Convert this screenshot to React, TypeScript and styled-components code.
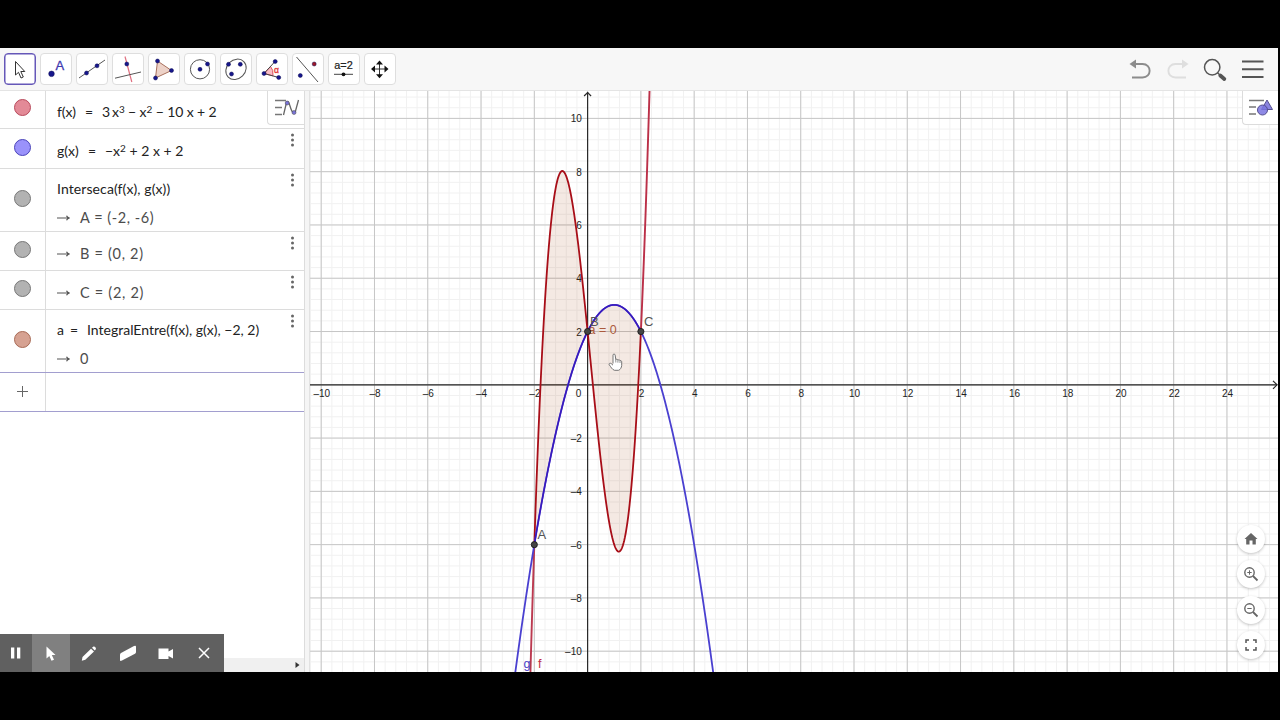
import React from "react";
import styled, { createGlobalStyle } from "styled-components";

const GlobalStyle = createGlobalStyle`
  * { box-sizing: border-box; }
  html, body { margin: 0; padding: 0; background: #000; overflow: hidden; }
`;

const Screen = styled.div`
  width: 1280px;
  height: 720px;
  padding: 48px 2px 48px 0;
  background: #000;
  font-family: "Liberation Sans", Arial, sans-serif;
`;
const Window = styled.div`
  height: 624px;
  display: flex;
  flex-direction: column;
  background: #fff;
  position: relative;
  overflow: hidden;
`;
const Toolbar = styled.div`
  height: 43px;
  flex: none;
  display: flex;
  align-items: center;
  justify-content: space-between;
  padding: 0 12px 0 4px;
  background: #f7f7f7;
  border-bottom: 1px solid #e4e4e4;
`;
const Tools = styled.div`
  display: flex;
  gap: 4px;
`;
const Tool = styled.div<{ $active?: boolean }>`
  width: 32px;
  height: 32px;
  border-radius: 4px;
  background: #fff;
  border: 1px solid ${(p) => (p.$active ? "#6557b8" : "#dedede")};
  box-shadow: ${(p) => (p.$active ? "inset 0 0 0 0.5px #6557b8" : "none")};
  display: flex;
  align-items: center;
  justify-content: center;
  svg { flex: none; display: block; }
`;
const Actions = styled.div`
  display: flex;
  align-items: center;
  svg { display: block; }
`;
const Body = styled.div`
  flex: 1;
  display: flex;
  min-height: 0;
`;
const Algebra = styled.div`
  width: 305px;
  flex: none;
  display: flex;
  flex-direction: column;
  border-right: 1px solid #dcdcdc;
  position: relative;
`;
const Splitter = styled.div`
  width: 5px;
  flex: none;
  background: #f5f5f5;
  border-right: 1px solid #e2e2e2;
`;
const Row = styled.div<{ $h: number; $input?: boolean }>`
  height: ${(p) => p.$h}px;
  flex: none;
  display: flex;
  border-bottom: ${(p) => (p.$input ? "1.5px solid #a29ecf" : "1px solid #dcdcdc")};
`;
const Marble = styled.div<{ $raise?: number }>`
  width: 46px;
  flex: none;
  border-right: 1px solid #dcdcdc;
  display: flex;
  align-items: center;
  justify-content: center;
  padding-bottom: ${(p) => p.$raise ?? 3}px;
`;
const Dot = styled.span<{ $fill: string; $line: string }>`
  width: 17px;
  height: 17px;
  border-radius: 50%;
  background: ${(p) => p.$fill};
  border: 1px solid ${(p) => p.$line};
`;
const Lines = styled.div`
  flex: 1;
  display: flex;
  flex-direction: column;
  padding-left: 11px;
`;
const Formula = styled.div<{ $top: number; $ls?: number }>`
  margin-top: ${(p) => p.$top}px;
  height: 20px;
  line-height: 20px;
  font-family: Lato, sans-serif;
  font-size: 14px;
  letter-spacing: ${(p) => p.$ls ?? 0}px;
  color: #222;
  white-space: pre;
  display: flex;
`;
const Output = styled(Formula)`
  font-size: 14.5px;
  letter-spacing: ${(p) => p.$ls ?? 0.7}px;
  color: #4c4c4c;
`;
const Arrow = styled.span`
  width: 23px;
  display: flex;
  align-items: center;
`;
const Sup = styled.sup`
  font-size: 10px;
  line-height: 10px;
  margin-top: 2px;
`;
const Tok = styled.span<{ $w: number }>`
  width: ${(p) => p.$w}px;
  flex: none;
`;
const More = styled.div`
  width: 24px;
  padding-top: 4px;
  display: flex;
  justify-content: center;
  align-items: flex-start;
`;
const StyleTab = styled.div<{ $w: number; $h: number }>`
  position: absolute;
  top: 0;
  right: 0;
  width: ${(p) => p.$w}px;
  height: ${(p) => p.$h}px;
  background: #fff;
  border-left: 1px solid #dcdcdc;
  border-bottom: 1px solid #dcdcdc;
  border-bottom-left-radius: 4px;
  svg { display: block; }
`;
const Plus = styled.span`
  width: 11px;
  height: 11px;
  background: linear-gradient(#666, #666) center / 11px 1px no-repeat,
    linear-gradient(#666, #666) center / 1px 11px no-repeat;
`;
const HScroll = styled.div`
  margin-top: auto;
  height: 14px;
  background: #f0f0f0;
  display: flex;
  justify-content: flex-end;
  align-items: center;
  padding-right: 4px;
`;
const Graph = styled.div`
  flex: 1;
  position: relative;
  overflow: hidden;
  > svg { display: block; }
`;
const Zooms = styled.div`
  position: absolute;
  right: 13px;
  bottom: 13px;
  display: flex;
  flex-direction: column;
  gap: 7.3px;
`;
const Round = styled.div`
  width: 28px;
  height: 28px;
  border-radius: 50%;
  background: #fff;
  box-shadow: 0 1px 3px rgba(0, 0, 0, 0.24);
  display: flex;
  align-items: center;
  justify-content: center;
`;
const Recorder = styled.div`
  position: absolute;
  left: 0;
  bottom: 0;
  width: 224px;
  height: 38px;
  background: #606060;
  display: flex;
`;
const RecButton = styled.div<{ $w: number; $on?: boolean }>`
  width: ${(p) => p.$w}px;
  background: ${(p) => (p.$on ? "#808080" : "transparent")};
  display: flex;
  align-items: center;
  justify-content: center;
`;

const navy = "#16168c";
const P = ({ x, y, c = navy }: { x: number; y: number; c?: string }) => (
  <circle cx={x} cy={y} r={2} fill={c} stroke="#0a0a50" strokeWidth={0.5} />
);
const Ico = ({ children, s = 32 }: { children: React.ReactNode; s?: number }) => (
  <svg width={s} height={s} viewBox={`0 0 ${s} ${s}`} fill="none">{children}</svg>
);

/* ---- graph geometry ---- */
const W = 968, H = 581, U = 26.64, OX = 277.6, OY = 293.8;
const px = (x: number) => OX + x * U;
const py = (y: number) => OY - y * U;
const f = (x: number) => 3 * x ** 3 - x ** 2 - 10 * x + 2;
const g = (x: number) => -(x ** 2) + 2 * x + 2;
const trace = (fn: (x: number) => number, a: number, b: number) => {
  const n = 160;
  return Array.from({ length: n + 1 }, (_, i) => {
    const x = a + ((b - a) * i) / n;
    return `${px(x).toFixed(2)},${py(fn(x)).toFixed(2)}`;
  });
};
const line = (pts: string[]) => "M" + pts.join("L");
const area = line([...trace(f, -2, 2), ...trace(g, -2, 2).reverse()]) + "Z";
const range = (a: number, b: number) => Array.from({ length: b - a + 1 }, (_, i) => a + i);
const num = (n: number) => (n < 0 ? "–" + -n : String(n));

const Plot = () => (
  <svg width={W} height={H} viewBox={`0 0 ${W} ${H}`} fill="none" fontFamily='"Liberation Sans", Arial, sans-serif'>
    {range(-26, 65).map((i) => (
      <line key={"a" + i} x1={px(i * 0.4)} x2={px(i * 0.4)} y1={0} y2={H} stroke="#f1f1f1" />
    ))}
    {range(-27, 28).map((i) => (
      <line key={"b" + i} y1={py(i * 0.4)} y2={py(i * 0.4)} x1={0} x2={W} stroke="#f1f1f1" />
    ))}
    {range(-5, 12).map((i) => (
      <line key={"c" + i} x1={px(i * 2)} x2={px(i * 2)} y1={0} y2={H} stroke="#c6c6c6" />
    ))}
    {range(-5, 5).map((i) => (
      <line key={"d" + i} y1={py(i * 2)} y2={py(i * 2)} x1={0} x2={W} stroke="#c6c6c6" />
    ))}
    <path d={`M0 ${OY}H${W - 1}M${OX} 1V${H}`} stroke="#2a2a2a" strokeWidth={1.2} />
    <path d={`M${W - 5} ${OY - 4}L${W - 1} ${OY}L${W - 5} ${OY + 4}M${OX - 3.5} 5L${OX} 1.5L${OX + 3.5} 5`} stroke="#2a2a2a" strokeWidth={1.2} />
    <g fontSize={10} fill="#222">
      {range(-5, 12).map((i) =>
        i === 0 ? (
          <text key={i} x={268.5} y={306} textAnchor="middle">0</text>
        ) : (
          <text key={i} x={px(i * 2) + (i < 0 ? 0.6 : 0.6)} y={306} textAnchor="middle">{num(i * 2)}</text>
        )
      )}
      {range(-5, 5).filter((i) => i !== 0).map((i) => (
        <text key={i} x={271.8} y={py(i * 2) + 4} textAnchor="end">{num(i * 2)}</text>
      ))}
    </g>
    <path d={area} fill="#993300" fillOpacity={0.11} />
    <path d={line(trace(f, -2.4, -2))} stroke="#bb3a50" strokeWidth={1.9} />
    <path d={line(trace(f, 2, 2.45))} stroke="#bb3048" strokeWidth={1.9} />
    <path d={line(trace(f, -2, 2))} stroke="#a80e18" strokeWidth={1.8} />
    <path d={line(trace(g, -3, 5))} stroke="#4a40d0" strokeWidth={1.8} />
    <path d={line(trace(g, -2, 2))} stroke="#3818bc" strokeWidth={1.5} />
    <g fontSize={13}>
      <text x={227.5} y={447.5} fill="#555">A</text>
      <text x={280} y={234.5} fill="#555">B</text>
      <text x={334} y={234.5} fill="#555">C</text>
      <text x={278.5} y={243} fontSize={12.5} fill="#ab5a3c">a = 0</text>
      <text x={213.500} y={577} fontSize={12.5} fill="#4a40c8">g</text>
      <text x={228} y={577} fontSize={12.5} fill="#c02a44">f</text>
    </g>
    {[[-2, -6], [0, 2], [2, 2]].map(([x, y]) => (
      <circle key={x} cx={px(x)} cy={py(y)} r={3.1} fill="#444" stroke="#111" strokeWidth={0.8} />
    ))}
    <path
      transform="translate(298,262)"
      d="M5 10.5V2.2C5 .6 7 .6 7.200 2.200L7.800 6.800C8.500 5.800 9.600 6.100 9.900 7.200C10.700 6.400 11.800 6.800 12 7.700C13 7.200 13.700 8 13.700 9V12.500C13.500 14.500 12.500 16.600 10.500 17.300H6.500C4 16.500 3 14 1.200 11.700C.6 10.400 2.300 9.700 3.300 10.700L5 12.200"
      fill="#fff" stroke="#666" strokeWidth={0.9} strokeLinejoin="round"
    />
    <path transform="translate(298,262)" d="M7.800 6.800V9.500M9.900 7.200V9.700M12 7.700V10" stroke="#777" strokeWidth={0.8} />
  </svg>
);

const Kebab = () => (
  <More>
    <svg width="5" height="14" viewBox="0 0 5 14" fill="#666">
      <circle cx="2.500" cy="2" r="1.500" /><circle cx="2.500" cy="7" r="1.500" /><circle cx="2.500" cy="12" r="1.500" />
    </svg>
  </More>
);
const To = () => (
  <Arrow>
    <svg width="14" height="8" viewBox="0 0 14 8" fill="none" stroke="#555" strokeWidth="1.200">
      <path d="M0 4H12M9.500 1.800C10 3 11 3.700 12.600 4C11 4.300 10 5 9.500 6.200" />
    </svg>
  </Arrow>
);

export default function App() {
  return (
    <Screen>
      <GlobalStyle />
      <Window>
        <Toolbar>
          <Tools>
            <Tool $active>
              <Ico>
                <path d="M11.500 8.500V22L14.500 19.300L17 25L19.300 24L16.800 18.500H20.800Z" fill="#fff" stroke="#333" strokeWidth="1" />
              </Ico>
            </Tool>
            <Tool>
              <Ico>
                <circle cx="11.500" cy="20.800" r="2.800" fill={navy} stroke="#0a0a50" strokeWidth="0.500" />
                <text x="15.500" y="16.500" fontSize="13" fill="#4038b0" stroke="#4038b0" strokeWidth="0.300" fontFamily='"Liberation Sans", sans-serif'>A</text>
              </Ico>
            </Tool>
            <Tool>
              <Ico><path d="M3 25L29 7" stroke="#555" /><P x={10.500} y={20} /><P x={21} y={12.800} /></Ico>
            </Tool>
            <Tool>
              <Ico><path d="M13 3.500L19.800 29" stroke="#e07080" strokeWidth="1.200" /><path d="M3 25.200L29 19" stroke="#555" /><P x={14.800} y={11} /></Ico>
            </Tool>
            <Tool>
              <Ico><path d="M9.500 8L23.500 17.500L7.500 25Z" fill="#edd2c8" stroke="#a8705c" /><P x={9.500} y={8} /><P x={23.500} y={17.500} /><P x={7.500} y={25} /></Ico>
            </Tool>
            <Tool>
              <Ico><circle cx="16" cy="16.300" r="9.600" stroke="#555" /><P x={16} y={16.300} /><P x={23.500} y={11} /></Ico>
            </Tool>
            <Tool>
              <Ico><ellipse cx="16" cy="16.300" rx="11" ry="9.300" transform="rotate(-45 16 16.300)" stroke="#555" /><P x={8.500} y={11.300} /><P x={20.300} y={11.300} /><P x={11.500} y={21} /></Ico>
            </Tool>
            <Tool>
              <Ico>
                <path d="M8 20.500L14.500 13.500Q17.500 16.500 17 22.800Z" fill="#f8bcc4" stroke="#dd5566" />
                <path d="M19.200 8.300L8 20.500L22.700 24.500" stroke="#444" />
                <P x={19.200} y={8.500} /><P x={8} y={20.500} /><P x={22.700} y={24.500} />
                <text x="18" y="19.500" fontSize="8.500" fill="#d33" stroke="#d33" strokeWidth="0.300" fontFamily='"Liberation Sans", sans-serif'>α</text>
              </Ico>
            </Tool>
            <Tool>
              <Ico><path d="M4.500 4L26 29" stroke="#555" /><P x={22.200} y={11} c="#a01828" /><P x={8.300} y={22.500} /></Ico>
            </Tool>
            <Tool>
              <Ico>
                <text x="6.300" y="15.500" fontSize="10" textLength="18.500" lengthAdjust="spacingAndGlyphs" fill="#222" stroke="#222" strokeWidth="0.200" fontFamily='"Liberation Sans", sans-serif'>a=2</text>
                <path d="M6 21.300H25" stroke="#444" /><circle cx="15.500" cy="21.300" r="1.900" fill="#111" />
              </Ico>
            </Tool>
            <Tool>
              <Ico>
                <path d="M9 16H23M15.500 10V23" stroke="#333" />
                <path d="M15.500 7.500L19 11.500H12ZM15.500 25.300L19 21.300H12ZM7 16L11 12.500V19.500ZM24.500 16L20.500 12.500V19.500Z" fill="#111" />
              </Ico>
            </Tool>
          </Tools>
          <Actions>
            <svg width="146" height="32" viewBox="0 0 146 32" fill="none">
              <path d="M14 11H22.500C32 11 32 24.500 22.500 24.500H12" stroke="#8c8c8c" strokeWidth="1.900" />
              <path d="M9.500 11L16 6.500V15.500Z" fill="#8c8c8c" />
              <path d="M64 11H55.500C46 11 46 24.500 55.500 24.500H66" stroke="#dedede" strokeWidth="1.900" />
              <path d="M68.500 11L62 6.500V15.500Z" fill="#dedede" />
              <circle cx="92.200" cy="14.300" r="7.700" stroke="#555" strokeWidth="1.500" />
              <path d="M97.500 19.800L100.500 22.500" stroke="#555" strokeWidth="1.400" />
              <path d="M100.300 22.500L104.300 26" stroke="#555" strokeWidth="3.800" strokeLinecap="round" />
              <path d="M122 8.500H143.500M122 16.300H143.500M122 24H143.500" stroke="#555" strokeWidth="2" />
            </svg>
          </Actions>
        </Toolbar>
        <Body>
          <Algebra>
            <Row $h={38}>
              <Marble $raise={4}><Dot $fill="#e38a97" $line="#b84a5c" /></Marble>
              <Lines>
                <Formula $top={11} $ls={-0.1}>
                  <Tok $w={28}>f(x)</Tok><Tok $w={17}>=</Tok><Tok $w={10}>3</Tok><span>x</span><Sup>3</Sup>
                  <span> − x</span><Sup>2</Sup><span> − 10 x + 2</span>
                </Formula>
              </Lines>
            </Row>
            <Row $h={40}>
              <Marble $raise={2}><Dot $fill="#9a92fb" $line="#4a44b8" /></Marble>
              <Lines>
                <Formula $top={12}>
                  <Tok $w={31}>g(x)</Tok><Tok $w={17}>=</Tok><span>−x</span><Sup>2</Sup><span> + 2 x + 2</span>
                </Formula>
              </Lines>
              <Kebab />
            </Row>
            <Row $h={63}>
              <Marble><Dot $fill="#b2b2b2" $line="#777" /></Marble>
              <Lines>
                <Formula $top={10} $ls={0.1}>Interseca(f(x), g(x))</Formula>
                <Output $top={9} $ls={0.55}><To />A = (-2, -6)</Output>
              </Lines>
              <Kebab />
            </Row>
            <Row $h={39}>
              <Marble><Dot $fill="#b2b2b2" $line="#777" /></Marble>
              <Lines><Output $top={12}><To />B = (0, 2)</Output></Lines>
              <Kebab />
            </Row>
            <Row $h={39}>
              <Marble><Dot $fill="#b2b2b2" $line="#777" /></Marble>
              <Lines><Output $top={12}><To />C = (2, 2)</Output></Lines>
              <Kebab />
            </Row>
            <Row $h={63} $input>
              <Marble><Dot $fill="#d6a292" $line="#a86a55" /></Marble>
              <Lines>
                <Formula $top={10}><Tok $w={13}>a</Tok><Tok $w={17}>=</Tok>IntegralEntre(f(x), g(x), −2, 2)</Formula>
                <Output $top={9}><To />0</Output>
              </Lines>
              <Kebab />
            </Row>
            <Row $h={39} $input>
              <Marble $raise={1}><Plus /></Marble>
            </Row>
            <HScroll>
              <svg width="5" height="8" viewBox="0 0 5 8"><path d="M0.500 1L4.500 4L0.500 7Z" fill="#333" /></svg>
            </HScroll>
            <StyleTab $w={37} $h={34}>
              <svg width="36" height="33" viewBox="0 0 36 33" fill="none">
                <path d="M7 9.500H18M7 16.500H14M7 23.500H14" stroke="#777" strokeWidth="1.500" />
                <path d="M15.500 24L18.500 11.500C20 9.500 21 11.500 22 15C24.500 23.500 26.500 23 27.500 20L30.500 9" stroke="#666" strokeWidth="1.300" />
                <circle cx="19.200" cy="12" r="2" fill="#7a74d8" stroke="#444" strokeWidth=".5" />
                <circle cx="26" cy="21.500" r="2" fill="#7a74d8" stroke="#444" strokeWidth=".5" />
              </svg>
            </StyleTab>
          </Algebra>
          <Splitter />
          <Graph>
            <Plot />
            <StyleTab $w={36} $h={34}>
              <svg width="35" height="33" viewBox="0 0 35 33" fill="none">
                <path d="M6 9.500H21M6 16H13M6 23H13" stroke="#777" strokeWidth="1.500" />
                <path d="M24 9L29.500 18.500H18.500Z" fill="#8a84e0" stroke="#55508f" strokeWidth="1" />
                <circle cx="19.500" cy="19" r="5" fill="#7a74e0" fillOpacity=".85" stroke="#55508f" />
              </svg>
            </StyleTab>
            <Zooms>
              <Round><Ico s={14}><path d="M7 1L13.500 7H11.800V12.500H8.500V8.500H5.500V12.500H2.200V7H.5Z" fill="#666" /></Ico></Round>
              <Round>
                <Ico s={16}><circle cx="6.500" cy="6.500" r="4.700" stroke="#666" strokeWidth="1.400" /><path d="M10 10L14.500 14.500" stroke="#666" strokeWidth="1.800" /><path d="M4.300 6.500H8.700M6.500 4.300V8.700" stroke="#666" /></Ico>
              </Round>
              <Round>
                <Ico s={16}><circle cx="6.500" cy="6.500" r="4.700" stroke="#666" strokeWidth="1.400" /><path d="M10 10L14.500 14.500" stroke="#666" strokeWidth="1.800" /><path d="M4.300 6.500H8.700" stroke="#666" /></Ico>
              </Round>
              <Round><Ico s={12}><path d="M1 4V1H4M8 1H11V4M11 8V11H8M4 11H1V8" stroke="#555" strokeWidth="1.500" /></Ico></Round>
            </Zooms>
          </Graph>
        </Body>
        <Recorder>
          <RecButton $w={32}><Ico s={12}><path d="M1 .5H4.300V11.500H1ZM7 .5H10.300V11.500H7Z" fill="#fff" /></Ico></RecButton>
          <RecButton $w={38} $on><Ico s={16}><path d="M3.500 1.500V13.500L6.300 11L8.500 15.800L11 14.700L8.800 10H12.500Z" fill="#fff" /></Ico></RecButton>
          <RecButton $w={38}><Ico s={16}><path d="M.8 15.700L1.500 12L10 3.700L13 6.500L4.300 14.800ZM11 2.800L12.200 1.700C13.500 .9 15.600 2.800 14.800 4.300L13.800 5.500Z" fill="#fff" /></Ico></RecButton>
          <RecButton $w={39}><Ico s={18}><path d="M1 10.500Q1 9.700 2 9L15 2Q17 1.200 17 2.500V8Q17 9 16 9.700L3 16.500Q1 17.500 1 16Z" fill="#fff" /></Ico></RecButton>
          <RecButton $w={38}><Ico s={16}><path d="M.5 3.500H10.500V6.500L15 4V13.500L10.500 11V14H.5Z" fill="#fff" /></Ico></RecButton>
          <RecButton $w={38}><Ico s={12}><path d="M1 1L11 11M11 1L1 11" stroke="#fff" strokeWidth="1.500" /></Ico></RecButton>
        </Recorder>
      </Window>
    </Screen>
  );
}
